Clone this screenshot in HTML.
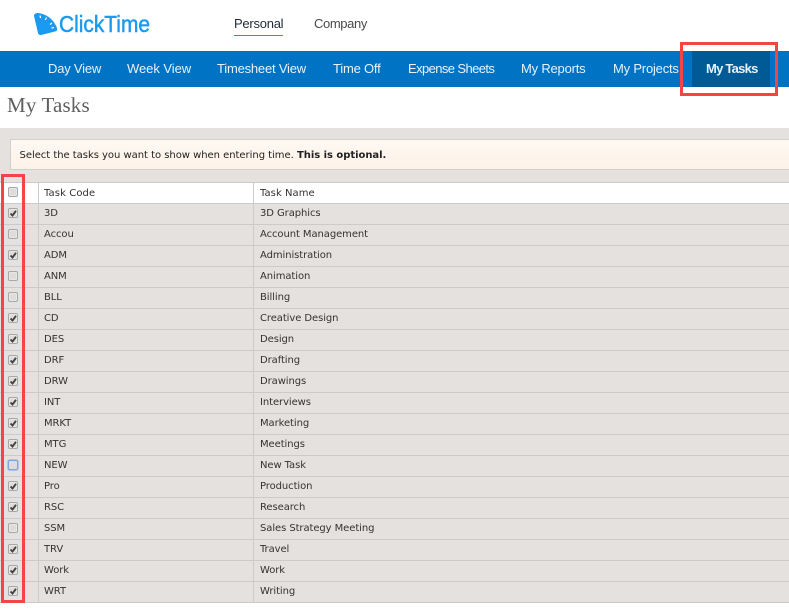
<!DOCTYPE html>
<html><head><meta charset="utf-8"><style>
html,body{margin:0;padding:0;background:#fff;width:789px;height:614px;overflow:hidden}
body{position:relative;font-family:"DejaVu Sans",sans-serif}
.a{position:absolute;white-space:nowrap}
.n{position:absolute;top:51px;height:36px;color:#e8f2fa;font:13px/35px "Liberation Sans",sans-serif;letter-spacing:-.2px}
.r{position:absolute;left:0;width:789px;height:20px;background:#e5e1de;border-bottom:1px solid #cccaca}
.r b{position:absolute;top:0;width:1px;height:21px;background:#cccaca}
.r b.x{left:38px}.r b.y{left:253px}
.r span{position:absolute;top:0;font:400 10px/19px "DejaVu Sans",sans-serif;color:#333;letter-spacing:-.08px;white-space:nowrap}
.r span.c{left:44px}.r span.t{left:260px}
.r i{position:absolute;left:8px;top:4px;width:8px;height:8px;border:1px solid #a8a8a8;border-radius:2px;background:#dfdddc;box-shadow:inset 0 0 0 1px #e9e7e6}
.r i svg{position:absolute;left:0;top:0}
</style></head><body>
<svg class="a" style="left:33px;top:11px" width="120" height="28" viewBox="0 0 120 28">
<path d="M1 5 C1 3 2.5 2 5 2 C14 3 21 9 24 17 C24.5 19 24 20 22 20.5 L8 24 C6.5 24.3 5.5 23.5 5 22 Z" fill="#1a9af0"/>
<path d="M7 4.5 L7.5 7 M13.5 6.5 L12.3 9 M19 12 L17 13.5 M21 16.5 L18.5 17" stroke="#fff" stroke-width="1.2" fill="none"/>
<text x="26" y="21" font-family="Liberation Sans,sans-serif" font-size="23.5" fill="#1a9af0" stroke="#1a9af0" stroke-width=".5" textLength="91" lengthAdjust="spacingAndGlyphs">ClickTime</text>
</svg>
<div class="a" style="left:234px;top:14px;font:13px/20px 'Liberation Sans',sans-serif;letter-spacing:-.25px;color:#1f2a36">Personal</div>
<div class="a" style="left:234px;top:35px;width:49px;height:1px;background:#2f8fd8"></div>
<div class="a" style="left:314px;top:14px;font:13px/20px 'Liberation Sans',sans-serif;letter-spacing:-.38px;color:#4a4a4a">Company</div>
<div class="a" style="left:0;top:51px;width:789px;height:36px;background:#0073c4"></div>
<div class="a" style="left:692px;top:51px;width:78px;height:36px;background:#005a96"></div>
<div class="n" style="left:48px">Day View</div>
<div class="n" style="left:127px;letter-spacing:-.05px">Week View</div>
<div class="n" style="left:217px">Timesheet View</div>
<div class="n" style="left:333px">Time Off</div>
<div class="n" style="left:408px;letter-spacing:-.6px">Expense Sheets</div>
<div class="n" style="left:521px">My Reports</div>
<div class="n" style="left:613px">My Projects</div>
<div class="n" style="left:706px;font-weight:700;letter-spacing:-.75px">My Tasks</div>
<div class="a" style="left:7px;top:92px;font:21px/26px 'Liberation Serif',serif;color:#5f5f5f;letter-spacing:.15px">My Tasks</div>
<div class="a" style="left:0;top:128px;width:789px;height:486px;background:#e5e1de"></div>
<div class="a" style="left:0;top:603px;width:789px;height:11px;background:#fff"></div>
<div class="a" style="left:10px;top:139px;width:779px;height:29px;background:linear-gradient(#fff8f2,#fdf2e8);border:1px solid #d2cfcc;border-right:0;font:10px/31px 'DejaVu Sans',sans-serif;color:#222;letter-spacing:-.03px;text-indent:8.5px">Select the tasks you want to show when entering time. <strong>This is optional.</strong></div>
<div class="r" style="top:182px;height:20px;background:#fff;border-top:1px solid #cccaca"><b class="x"></b><b class="y"></b><i></i><span class="c" style="top:1px;letter-spacing:.1px">Task Code</span><span class="t" style="top:1px;letter-spacing:.05px">Task Name</span></div>
<svg width="0" height="0" style="position:absolute"><defs><path id="k" d="M1.5 4.5 L3.5 6.5 L7 1.8" stroke="#444" stroke-width="1.9" fill="none"/></defs></svg>
<div class="r" style="top:204px"><b class="x"></b><b class="y"></b><i><svg width="8" height="8"><use href="#k"/></svg></i><span class="c">3D</span><span class="t">3D Graphics</span></div>
<div class="r" style="top:225px"><b class="x"></b><b class="y"></b><i></i><span class="c">Accou</span><span class="t">Account Management</span></div>
<div class="r" style="top:246px"><b class="x"></b><b class="y"></b><i><svg width="8" height="8"><use href="#k"/></svg></i><span class="c">ADM</span><span class="t">Administration</span></div>
<div class="r" style="top:267px"><b class="x"></b><b class="y"></b><i></i><span class="c">ANM</span><span class="t">Animation</span></div>
<div class="r" style="top:288px"><b class="x"></b><b class="y"></b><i></i><span class="c">BLL</span><span class="t">Billing</span></div>
<div class="r" style="top:309px"><b class="x"></b><b class="y"></b><i><svg width="8" height="8"><use href="#k"/></svg></i><span class="c">CD</span><span class="t">Creative Design</span></div>
<div class="r" style="top:330px"><b class="x"></b><b class="y"></b><i><svg width="8" height="8"><use href="#k"/></svg></i><span class="c">DES</span><span class="t">Design</span></div>
<div class="r" style="top:351px"><b class="x"></b><b class="y"></b><i><svg width="8" height="8"><use href="#k"/></svg></i><span class="c">DRF</span><span class="t">Drafting</span></div>
<div class="r" style="top:372px"><b class="x"></b><b class="y"></b><i><svg width="8" height="8"><use href="#k"/></svg></i><span class="c">DRW</span><span class="t">Drawings</span></div>
<div class="r" style="top:393px"><b class="x"></b><b class="y"></b><i><svg width="8" height="8"><use href="#k"/></svg></i><span class="c">INT</span><span class="t">Interviews</span></div>
<div class="r" style="top:414px"><b class="x"></b><b class="y"></b><i><svg width="8" height="8"><use href="#k"/></svg></i><span class="c">MRKT</span><span class="t">Marketing</span></div>
<div class="r" style="top:435px"><b class="x"></b><b class="y"></b><i><svg width="8" height="8"><use href="#k"/></svg></i><span class="c">MTG</span><span class="t">Meetings</span></div>
<div class="r" style="top:456px"><b class="x"></b><b class="y"></b><i style="border-color:#7da7dc;box-shadow:0 0 0 1px #a9c6ec"></i><span class="c">NEW</span><span class="t">New Task</span></div>
<div class="r" style="top:477px"><b class="x"></b><b class="y"></b><i><svg width="8" height="8"><use href="#k"/></svg></i><span class="c">Pro</span><span class="t">Production</span></div>
<div class="r" style="top:498px"><b class="x"></b><b class="y"></b><i><svg width="8" height="8"><use href="#k"/></svg></i><span class="c">RSC</span><span class="t">Research</span></div>
<div class="r" style="top:519px"><b class="x"></b><b class="y"></b><i></i><span class="c">SSM</span><span class="t">Sales Strategy Meeting</span></div>
<div class="r" style="top:540px"><b class="x"></b><b class="y"></b><i><svg width="8" height="8"><use href="#k"/></svg></i><span class="c">TRV</span><span class="t">Travel</span></div>
<div class="r" style="top:561px"><b class="x"></b><b class="y"></b><i><svg width="8" height="8"><use href="#k"/></svg></i><span class="c">Work</span><span class="t">Work</span></div>
<div class="r" style="top:582px"><b class="x"></b><b class="y"></b><i><svg width="8" height="8"><use href="#k"/></svg></i><span class="c">WRT</span><span class="t">Writing</span></div>
<div class="a" style="left:1px;top:174px;width:18px;height:423px;border:3px solid #f44444"></div>
<div class="a" style="left:680px;top:42px;width:92px;height:48px;border:3px solid #f44444"></div>
</body></html>
